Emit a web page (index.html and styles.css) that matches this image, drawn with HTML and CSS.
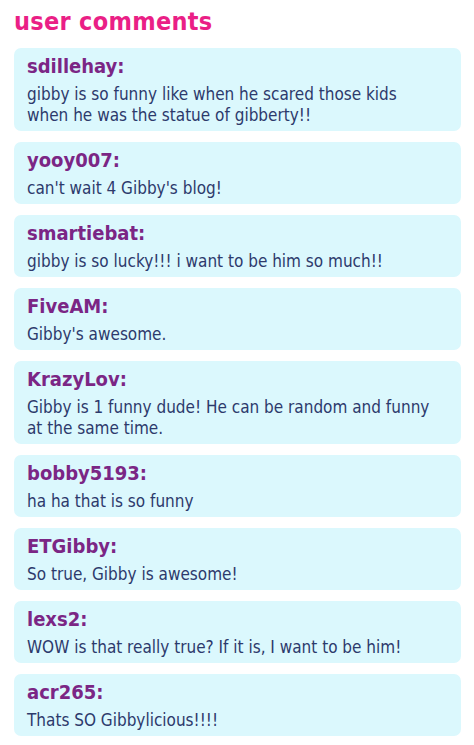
FILE: index.html
```html
<!DOCTYPE html>
<html lang="en">
<head>
  <meta charset="UTF-8">
  <title>user comments</title>
  <meta name="viewport" content="width=device-width, initial-scale=1.0"/>
  <link rel="stylesheet" href="styles.css">
</head>
<body>
  <h1 class="title">user comments</h1>
  <div class="comments">
    <div class="comment">
      <div class="user">sdillehay:</div>
      <div class="text">gibby is so funny like when he scared those kids when he was the statue of gibberty!!</div>
    </div>
    <div class="comment">
      <div class="user">yooy007:</div>
      <div class="text">can't wait 4 Gibby's blog!</div>
    </div>
    <div class="comment">
      <div class="user">smartiebat:</div>
      <div class="text">gibby is so lucky!!! i want to be him so much!!</div>
    </div>
    <div class="comment">
      <div class="user">FiveAM:</div>
      <div class="text">Gibby's awesome.</div>
    </div>
    <div class="comment">
      <div class="user">KrazyLov:</div>
      <div class="text">Gibby is 1 funny dude! He can be random and funny at the same time.</div>
    </div>
    <div class="comment">
      <div class="user">bobby5193:</div>
      <div class="text">ha ha that is so funny</div>
    </div>
    <div class="comment">
      <div class="user">ETGibby:</div>
      <div class="text">So true, Gibby is awesome!</div>
    </div>
    <div class="comment">
      <div class="user">lexs2:</div>
      <div class="text">WOW is that really true? If it is, I want to be him!</div>
    </div>
    <div class="comment">
      <div class="user">acr265:</div>
      <div class="text">Thats SO Gibbylicious!!!!</div>
    </div>
  </div>
</body>
</html>
```

FILE: styles.css
```css
body {
  margin: 0;
  padding: 0 13px 0 14px;
  background: #fff;
  font-family: 'DejaVu Sans Condensed', 'DejaVu Sans', sans-serif;
  color: #2d3a6c;
}
.title {
  font-family: 'Comic Sans MS', 'DejaVu Sans Condensed', sans-serif;
  font-size: 25px;
  font-weight: 700;
  color: #ea1f86;
  margin: 0;
  padding: 5px 0 0 0;
  height: 43px;
  line-height: 34px;
  letter-spacing: 0.3px;
}
.comments {
  display: flex;
  flex-direction: column;
  gap: 11px;
}
.comment {
  background: #dbf8fd;
  border-radius: 7px;
  padding: 6px 22px 5px 13px;
}
.user {
  font-size: 20px;
  font-weight: 700;
  color: #7b2685;
  line-height: 24px;
  margin-bottom: 6px;
}
.text {
  font-size: 17px;
  line-height: 21px;
}
```
